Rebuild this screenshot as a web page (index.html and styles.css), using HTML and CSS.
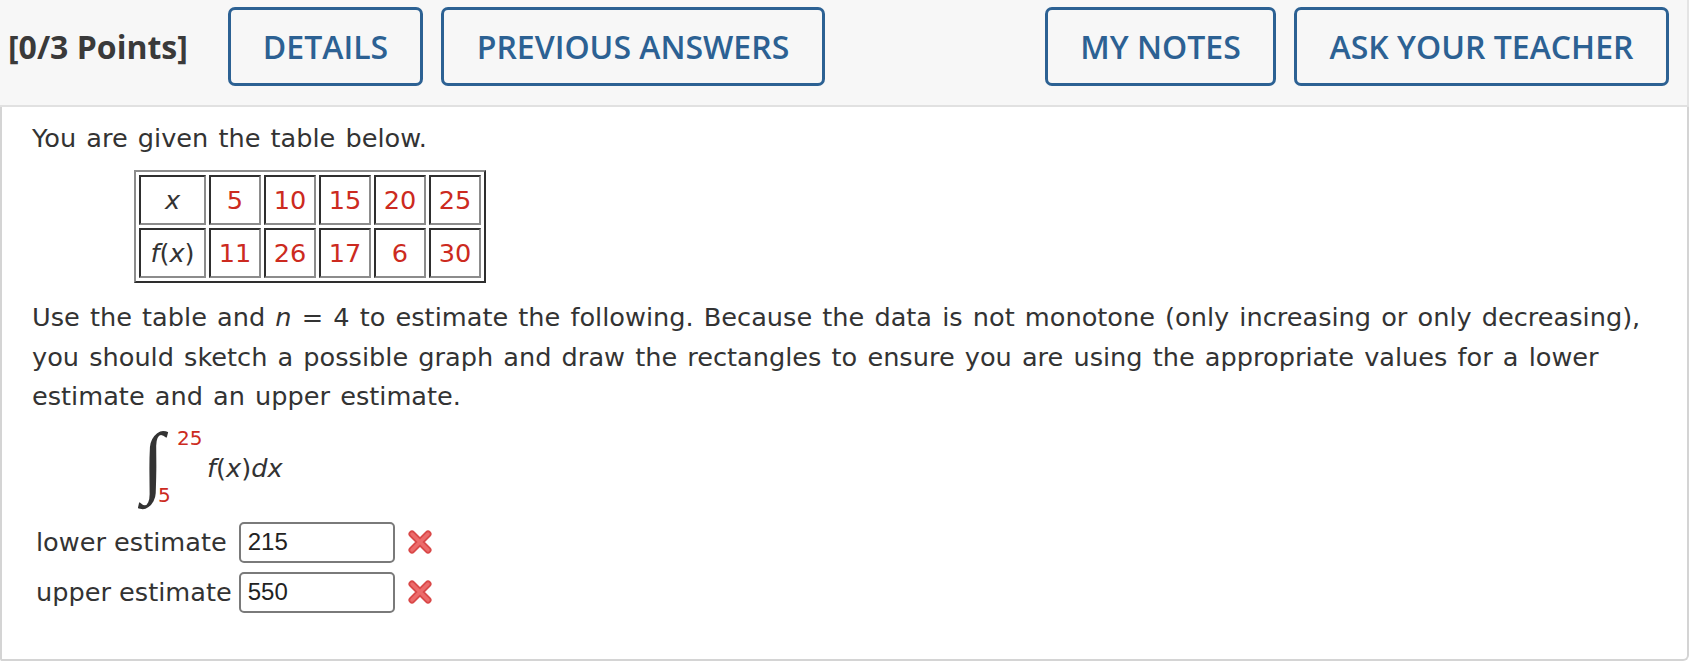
FILE: index.html
```html
<!DOCTYPE html>
<html lang="en">
<head>
<meta charset="utf-8">
<title>Question</title>
<link rel="stylesheet" href="styles.css">
</head>
<body>
<div class="question">
  <div class="q-header">
    <span class="points">[0/3 Points]</span>
    <button class="hbtn b-details">DETAILS</button>
    <button class="hbtn b-prev">PREVIOUS ANSWERS</button>
    <button class="hbtn b-notes">MY NOTES</button>
    <button class="hbtn b-ask">ASK YOUR TEACHER</button>
  </div>
  <div class="q-body">
    <p class="line">You are given the table below.</p>
    <table class="data">
      <tr>
        <td class="head"><i>x</i></td>
        <td class="num">5</td>
        <td class="num">10</td>
        <td class="num">15</td>
        <td class="num">20</td>
        <td class="num">25</td>
      </tr>
      <tr>
        <td class="head"><i>f</i>(<i>x</i>)</td>
        <td class="num">11</td>
        <td class="num">26</td>
        <td class="num">17</td>
        <td class="num">6</td>
        <td class="num">30</td>
      </tr>
    </table>
    <p class="para">Use the table and <i>n</i> = 4 to estimate the following. Because the data is not monotone (only increasing or only decreasing), you should sketch a possible graph and draw the rectangles to ensure you are using the appropriate values for a lower estimate and an upper estimate.</p>
    <div class="integral">
      <span class="int-sign">∫</span>
      <span class="lim lim-up">25</span>
      <span class="lim lim-low">5</span>
      <span class="expr"><i>f</i>(<i>x</i>)<i>dx</i></span>
    </div>
    <div class="answers">
      <span class="lbl">lower estimate</span>
      <input class="ans" type="text" value="215">
      <svg class="wrong" width="28" height="26" viewBox="0 0 28 26"><path d="M6 5 L22 21 M22 5 L6 21" stroke="#d94848" stroke-width="7" stroke-linecap="round" fill="none"/><path d="M6 5 L22 21 M22 5 L6 21" stroke="#ec6b6b" stroke-width="3.5" stroke-linecap="round" fill="none"/></svg>
      <span class="lbl">upper estimate</span>
      <input class="ans" type="text" value="550">
      <svg class="wrong" width="28" height="26" viewBox="0 0 28 26"><path d="M6 5 L22 21 M22 5 L6 21" stroke="#d94848" stroke-width="7" stroke-linecap="round" fill="none"/><path d="M6 5 L22 21 M22 5 L6 21" stroke="#ec6b6b" stroke-width="3.5" stroke-linecap="round" fill="none"/></svg>
    </div>
  </div>
</div>
</body>
</html>
```
FILE: styles.css
```css
* { box-sizing: border-box; }
body {
  margin: 0;
  background: #fff;
  font-family: "DejaVu Sans", Verdana, sans-serif;
  color: #333;
}
.question { width: 1689px; }

.q-header {
  display: flex;
  align-items: center;
  height: 107px;
  padding: 7px 18px 19px 8px;
  background: #f7f7f7;
  border-bottom: 2px solid #e1e1e1;
  border-right: 2px solid #e4e4e4;
}
.points {
  width: 220px;
  font-family: "Open Sans", sans-serif;
  font-weight: 700;
  font-size: 32px;
  color: #3a3a3a;
}
.hbtn {
  height: 79px;
  margin: 0 18px 0 0;
  padding: 0;
  border: 3px solid #2c6193;
  border-radius: 7px;
  background: #f7f7f7;
  color: #2c6193;
  font-family: "Open Sans", sans-serif;
  font-weight: 600;
  font-size: 32px;
  text-align: center;
}
.b-details { width: 195px; }
.b-prev { width: 384px; }
.b-notes { width: 231px; margin-left: auto; }
.b-ask { width: 375px; margin-right: 0; }

.q-body {
  border: 2px solid #d4d4d4;
  border-top: none;
  border-bottom-right-radius: 6px;
  border-bottom-left-radius: 2px;
  padding: 11px 30px 46px 30px;
  font-size: 25.6px;
  line-height: 40px;
  word-spacing: 2px;
}
.line { margin: 0; }

.data {
  margin: 12px 0 0 102px;
  border-collapse: separate;
  border-spacing: 3px;
  border: 2px solid;
  border-color: #8c8c8c #2e2e2e #2e2e2e #8c8c8c;
}
.data td {
  height: 50px;
  width: 52px;
  padding: 0;
  text-align: center;
  border: 2px solid;
  border-color: #2e2e2e #8c8c8c #8c8c8c #2e2e2e;
  line-height: 30px;
}
.data td.head { width: 67px; color: #333; }
.data td.num { color: #cc2a20; }

.para { margin: 15px 0 0 0; line-height: 39.5px; }

.integral {
  position: relative;
  display: flex;
  align-items: flex-start;
  height: 84px;
  margin: 11px 0 0 110px;
}
.int-sign {
  width: 65px;
  margin-top: -4px;
  font-family: "Liberation Serif", serif;
  font-size: 80px;
  line-height: 74px;
  height: 74px;
  color: #333;
}
.lim {
  position: absolute;
  font-size: 20px;
  line-height: 20px;
  color: #cc2a20;
}
.lim-up { left: 35px; top: 0; }
.lim-low { left: 16px; top: 57px; }
.expr { padding-top: 20px; }

.answers {
  display: grid;
  grid-template-columns: auto 156px auto;
  column-gap: 7px;
  row-gap: 9px;
  align-items: center;
  justify-content: start;
  margin: 10px 0 0 4px;
}
.lbl { white-space: nowrap; word-spacing: 0; }
.ans {
  width: 156px;
  height: 41px;
  border: 2px solid #7a7a7a;
  border-radius: 5px;
  padding: 0 0 0 7px;
  font-family: "Liberation Sans", Arial, sans-serif;
  font-size: 24px;
  color: #222;
  background: #fff;
}
.wrong { margin-left: 4px; }
```
